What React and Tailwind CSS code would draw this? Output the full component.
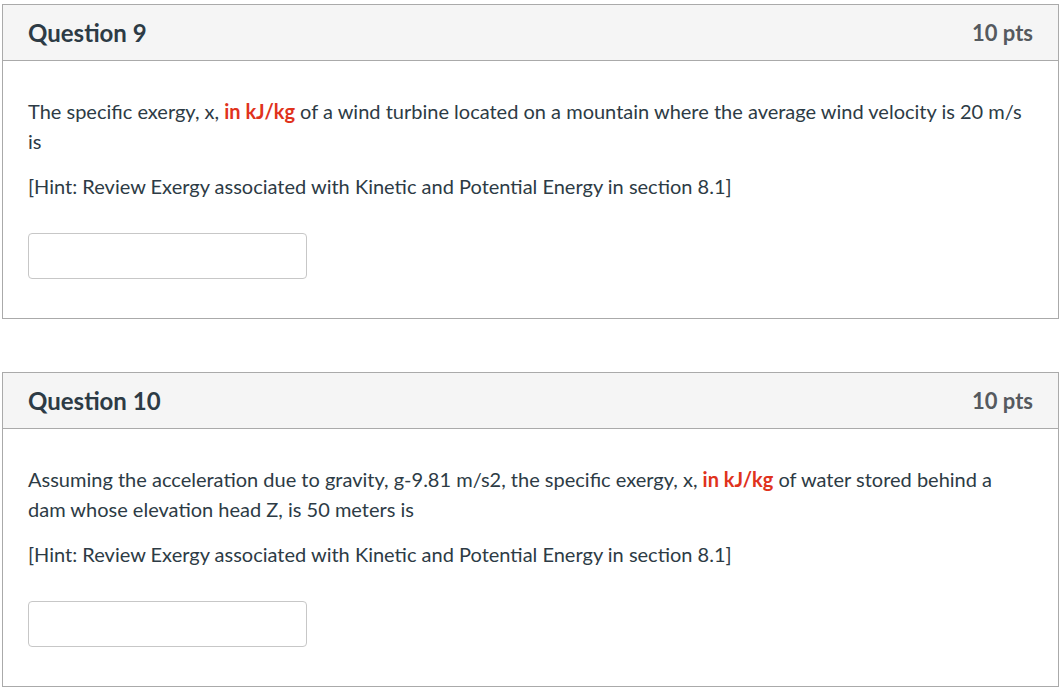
import React from "react";

function Question({ title, children, mt }) {
  return (
    <div className={`mx-[2px] ${mt} border border-[#aaaaaa] bg-white`}>
      <div className="flex h-[56px] items-center justify-between border-b border-[#aaaaaa] bg-[#f5f5f5] pl-[25px] pr-[25px]">
        <div className="text-[24px] font-bold text-[#2d3b45]">{title}</div>
        <div className="text-[22px] font-bold text-[#555a5f]">10 pts</div>
      </div>
      <div className="pl-[25px] pr-[30px] pt-[35px] pb-[39px] text-[20px] leading-[30px] text-[#2d3b45]">
        {children}
        <p className="mt-[15px]">[Hint: Review Exergy associated with Kinetic and Potential Energy in section 8.1]</p>
        <div className="mt-[32px] h-[46px] w-[279px] rounded-[4px] border border-[#c7c7c7] bg-white" />
      </div>
    </div>
  );
}

export default function App() {
  return (
    <div className="min-h-[688px] w-[1061px] bg-white pt-[4px]" style={{ fontFamily: "Lato, 'Noto Sans', sans-serif" }}>
      <Question title="Question 9" mt="">
        <p>
          The specific exergy, x, <span className="font-bold text-[#e0321c]">in kJ/kg</span> of a wind turbine located on a mountain where the average wind velocity is 20 m/s is
        </p>
      </Question>
      <Question title="Question 10" mt="mt-[53px]">
        <p>
          Assuming the acceleration due to gravity, g-9.81 m/s2, the specific exergy, x, <span className="font-bold text-[#e0321c]">in kJ/kg</span> of water stored behind a dam whose elevation head Z, is 50 meters is
        </p>
      </Question>
    </div>
  );
}
